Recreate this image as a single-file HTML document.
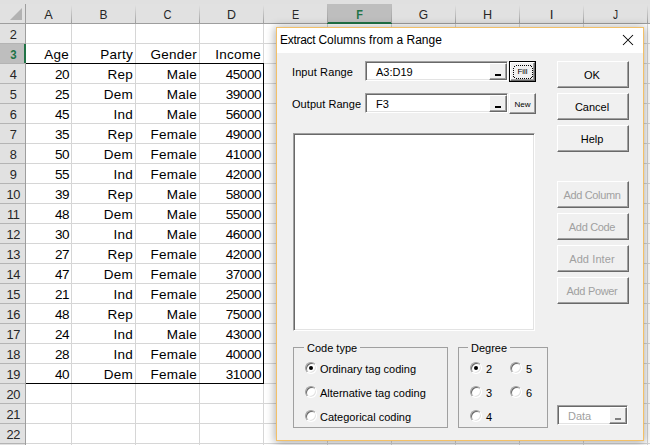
<!DOCTYPE html>
<html><head><meta charset="utf-8"><title>Extract Columns from a Range</title>
<style>
html,body{margin:0;padding:0;}
body{width:650px;height:445px;overflow:hidden;background:#fff;position:relative;font-family:"Liberation Sans",sans-serif;}
.a{position:absolute;}
.sheet{position:absolute;left:0;top:0;width:650px;height:445px;overflow:hidden;background:#fff;}
.hdr{background:#e1e1e1;}
.vl{position:absolute;width:1px;background:#d6d6d6;}
.hl{position:absolute;height:1px;background:#d6d6d6;}
.ch{position:absolute;top:5px;height:19px;line-height:19px;text-align:center;font-size:13.5px;color:#262626;}
.rh{position:absolute;left:0;width:25px;height:19px;line-height:22px;text-align:center;font-size:13.5px;color:#262626;}
.c{position:absolute;height:19px;line-height:21px;text-align:right;font-size:13.5px;color:#000;white-space:nowrap;}
.c{letter-spacing:0.25px;}
.c.n{letter-spacing:-0.45px;}
.rh{letter-spacing:-0.5px;text-indent:1.5px;transform:scaleX(0.95);}
.dlg{position:absolute;left:276px;top:27px;width:366px;height:412px;border:1px solid #f3c067;background:#f0f0f0;box-shadow:0 1px 9px 1px rgba(0,0,0,0.33);}
.title{position:absolute;left:0;top:0;width:366px;height:25px;background:#fff;}
.tt{position:absolute;left:3px;top:0;line-height:25px;font-size:12px;color:#000;white-space:nowrap;}
.lbl{position:absolute;font-size:11px;line-height:13px;color:#000;white-space:nowrap;}
.btn{position:absolute;box-sizing:border-box;background:#f0f0f0;border:1px solid;border-color:#fff #696969 #696969 #fff;box-shadow:inset -1px -1px 0 #a0a0a0;font-size:11px;color:#000;text-align:center;white-space:nowrap;}
.btn.dis{color:#a0a0a0;letter-spacing:-0.33px;}
.sunk{position:absolute;box-sizing:border-box;background:#fff;border:1px solid;border-color:#a0a0a0 #fff #fff #a0a0a0;box-shadow:inset 1px 1px 0 #696969,inset -1px -1px 0 #e3e3e3;}
.grp{position:absolute;box-sizing:border-box;border:1px solid #a0a0a0;}
.grp span{position:absolute;top:-6px;background:#f0f0f0;font-size:11px;line-height:13px;padding:0 3px;white-space:nowrap;}
.rad{position:absolute;width:12px;height:12px;box-sizing:border-box;border-radius:50%;background:#fff;border:1px solid;border-color:#a0a0a0 #fff #fff #a0a0a0;box-shadow:inset 1px 1px 0 #696969,inset -1px -1px 0 #e3e3e3;transform:rotate(0deg);}
.rad.on:after{content:"";position:absolute;left:3px;top:3px;width:4px;height:4px;border-radius:50%;background:#000;}
</style></head><body>
<div class="sheet">

<div class="a" style="left:0;top:0;width:650px;height:4px;background:#e0e0e0"></div>
<div class="a hdr" style="left:0;top:4px;width:650px;height:19px"></div>
<div class="a hdr" style="left:0;top:24px;width:25px;height:421px"></div>
<div class="a" style="left:327px;top:4px;width:65px;height:18px;background:#bebebe"></div>
<div class="a" style="left:327px;top:22px;width:65px;height:2px;background:#217346"></div>
<div class="a" style="left:0;top:44px;width:24px;height:19px;background:#bebebe"></div>
<div class="vl" style="left:71px;top:24px;height:421px"></div>
<div class="vl" style="left:135px;top:24px;height:421px"></div>
<div class="vl" style="left:199px;top:24px;height:421px"></div>
<div class="vl" style="left:263px;top:24px;height:421px"></div>
<div class="vl" style="left:327px;top:24px;height:421px"></div>
<div class="vl" style="left:391px;top:24px;height:421px"></div>
<div class="vl" style="left:455px;top:24px;height:421px"></div>
<div class="vl" style="left:519px;top:24px;height:421px"></div>
<div class="vl" style="left:583px;top:24px;height:421px"></div>
<div class="vl" style="left:647px;top:24px;height:421px"></div>
<div class="hl" style="left:26px;top:43px;width:624px"></div>
<div class="hl" style="left:0;top:43px;width:25px;background:#b4b4b4"></div>
<div class="hl" style="left:26px;top:63px;width:624px"></div>
<div class="hl" style="left:0;top:63px;width:25px;background:#b4b4b4"></div>
<div class="hl" style="left:26px;top:83px;width:624px"></div>
<div class="hl" style="left:0;top:83px;width:25px;background:#b4b4b4"></div>
<div class="hl" style="left:26px;top:103px;width:624px"></div>
<div class="hl" style="left:0;top:103px;width:25px;background:#b4b4b4"></div>
<div class="hl" style="left:26px;top:123px;width:624px"></div>
<div class="hl" style="left:0;top:123px;width:25px;background:#b4b4b4"></div>
<div class="hl" style="left:26px;top:143px;width:624px"></div>
<div class="hl" style="left:0;top:143px;width:25px;background:#b4b4b4"></div>
<div class="hl" style="left:26px;top:163px;width:624px"></div>
<div class="hl" style="left:0;top:163px;width:25px;background:#b4b4b4"></div>
<div class="hl" style="left:26px;top:183px;width:624px"></div>
<div class="hl" style="left:0;top:183px;width:25px;background:#b4b4b4"></div>
<div class="hl" style="left:26px;top:203px;width:624px"></div>
<div class="hl" style="left:0;top:203px;width:25px;background:#b4b4b4"></div>
<div class="hl" style="left:26px;top:223px;width:624px"></div>
<div class="hl" style="left:0;top:223px;width:25px;background:#b4b4b4"></div>
<div class="hl" style="left:26px;top:243px;width:624px"></div>
<div class="hl" style="left:0;top:243px;width:25px;background:#b4b4b4"></div>
<div class="hl" style="left:26px;top:263px;width:624px"></div>
<div class="hl" style="left:0;top:263px;width:25px;background:#b4b4b4"></div>
<div class="hl" style="left:26px;top:283px;width:624px"></div>
<div class="hl" style="left:0;top:283px;width:25px;background:#b4b4b4"></div>
<div class="hl" style="left:26px;top:303px;width:624px"></div>
<div class="hl" style="left:0;top:303px;width:25px;background:#b4b4b4"></div>
<div class="hl" style="left:26px;top:323px;width:624px"></div>
<div class="hl" style="left:0;top:323px;width:25px;background:#b4b4b4"></div>
<div class="hl" style="left:26px;top:343px;width:624px"></div>
<div class="hl" style="left:0;top:343px;width:25px;background:#b4b4b4"></div>
<div class="hl" style="left:26px;top:363px;width:624px"></div>
<div class="hl" style="left:0;top:363px;width:25px;background:#b4b4b4"></div>
<div class="hl" style="left:26px;top:383px;width:624px"></div>
<div class="hl" style="left:0;top:383px;width:25px;background:#b4b4b4"></div>
<div class="hl" style="left:26px;top:403px;width:624px"></div>
<div class="hl" style="left:0;top:403px;width:25px;background:#b4b4b4"></div>
<div class="hl" style="left:26px;top:423px;width:624px"></div>
<div class="hl" style="left:0;top:423px;width:25px;background:#b4b4b4"></div>
<div class="hl" style="left:26px;top:443px;width:624px"></div>
<div class="hl" style="left:0;top:443px;width:25px;background:#b4b4b4"></div>
<div class="hl" style="left:26px;top:463px;width:624px"></div>
<div class="hl" style="left:0;top:463px;width:25px;background:#b4b4b4"></div>
<div class="a" style="left:0;top:23px;width:650px;height:1px;background:#9e9e9e"></div>
<div class="a" style="left:327px;top:22px;width:65px;height:2px;background:#217346"></div>
<div class="a" style="left:25px;top:4px;width:1px;height:441px;background:#9e9e9e"></div>
<div class="a" style="left:24px;top:44px;width:2px;height:19px;background:#217346"></div>
<div class="a" style="left:71px;top:5px;width:1px;height:18px;background:linear-gradient(to bottom,rgba(160,160,160,0),rgba(160,160,160,1))"></div>
<div class="a" style="left:135px;top:5px;width:1px;height:18px;background:linear-gradient(to bottom,rgba(160,160,160,0),rgba(160,160,160,1))"></div>
<div class="a" style="left:199px;top:5px;width:1px;height:18px;background:linear-gradient(to bottom,rgba(160,160,160,0),rgba(160,160,160,1))"></div>
<div class="a" style="left:263px;top:5px;width:1px;height:18px;background:linear-gradient(to bottom,rgba(160,160,160,0),rgba(160,160,160,1))"></div>
<div class="a" style="left:327px;top:5px;width:1px;height:18px;background:linear-gradient(to bottom,rgba(160,160,160,0),rgba(160,160,160,1))"></div>
<div class="a" style="left:391px;top:5px;width:1px;height:18px;background:linear-gradient(to bottom,rgba(160,160,160,0),rgba(160,160,160,1))"></div>
<div class="a" style="left:455px;top:5px;width:1px;height:18px;background:linear-gradient(to bottom,rgba(160,160,160,0),rgba(160,160,160,1))"></div>
<div class="a" style="left:519px;top:5px;width:1px;height:18px;background:linear-gradient(to bottom,rgba(160,160,160,0),rgba(160,160,160,1))"></div>
<div class="a" style="left:583px;top:5px;width:1px;height:18px;background:linear-gradient(to bottom,rgba(160,160,160,0),rgba(160,160,160,1))"></div>
<div class="a" style="left:647px;top:5px;width:1px;height:18px;background:linear-gradient(to bottom,rgba(160,160,160,0),rgba(160,160,160,1))"></div>
<svg class="a" style="left:10px;top:8px" width="12" height="12"><polygon points="12,0 12,12 0,12" fill="#b2b2b2"/></svg>
<div class="ch" style="left:26px;width:45px;transform:scaleX(0.94);">A</div>
<div class="ch" style="left:72px;width:63px;transform:scaleX(0.89);">B</div>
<div class="ch" style="left:136px;width:63px;transform:scaleX(0.82);">C</div>
<div class="ch" style="left:200px;width:63px;transform:scaleX(0.92);">D</div>
<div class="ch" style="left:264px;width:63px;transform:scaleX(0.80);">E</div>
<div class="ch" style="left:328px;width:63px;font-weight:bold;color:#217346;transform:scaleX(0.8);">F</div>
<div class="ch" style="left:392px;width:63px;transform:scaleX(0.89);">G</div>
<div class="ch" style="left:456px;width:63px;transform:scaleX(0.93);">H</div>
<div class="ch" style="left:520px;width:63px;transform:scaleX(0.99);">I</div>
<div class="ch" style="left:584px;width:63px;transform:scaleX(0.75);">J</div>
<div class="rh" style="top:24px;">2</div>
<div class="rh" style="top:44px;font-weight:bold;color:#217346;transform:scaleX(0.85);">3</div>
<div class="rh" style="top:64px;">4</div>
<div class="rh" style="top:84px;">5</div>
<div class="rh" style="top:104px;">6</div>
<div class="rh" style="top:124px;">7</div>
<div class="rh" style="top:144px;">8</div>
<div class="rh" style="top:164px;">9</div>
<div class="rh" style="top:184px;">10</div>
<div class="rh" style="top:204px;">11</div>
<div class="rh" style="top:224px;">12</div>
<div class="rh" style="top:244px;">13</div>
<div class="rh" style="top:264px;">14</div>
<div class="rh" style="top:284px;">15</div>
<div class="rh" style="top:304px;">16</div>
<div class="rh" style="top:324px;">17</div>
<div class="rh" style="top:344px;">18</div>
<div class="rh" style="top:364px;">19</div>
<div class="rh" style="top:384px;">20</div>
<div class="rh" style="top:404px;">21</div>
<div class="rh" style="top:424px;">22</div>
<div class="c" style="left:25px;top:44px;width:44px">Age</div>
<div class="c" style="left:71px;top:44px;width:62px">Party</div>
<div class="c" style="left:135px;top:44px;width:62px">Gender</div>
<div class="c" style="left:199px;top:44px;width:62px">Income</div>
<div class="c n" style="left:25px;top:64px;width:44px">20</div>
<div class="c" style="left:71px;top:64px;width:62px">Rep</div>
<div class="c" style="left:135px;top:64px;width:62px">Male</div>
<div class="c n" style="left:199px;top:64px;width:62px">45000</div>
<div class="c n" style="left:25px;top:84px;width:44px">25</div>
<div class="c" style="left:71px;top:84px;width:62px">Dem</div>
<div class="c" style="left:135px;top:84px;width:62px">Male</div>
<div class="c n" style="left:199px;top:84px;width:62px">39000</div>
<div class="c n" style="left:25px;top:104px;width:44px">45</div>
<div class="c" style="left:71px;top:104px;width:62px">Ind</div>
<div class="c" style="left:135px;top:104px;width:62px">Male</div>
<div class="c n" style="left:199px;top:104px;width:62px">56000</div>
<div class="c n" style="left:25px;top:124px;width:44px">35</div>
<div class="c" style="left:71px;top:124px;width:62px">Rep</div>
<div class="c" style="left:135px;top:124px;width:62px">Female</div>
<div class="c n" style="left:199px;top:124px;width:62px">49000</div>
<div class="c n" style="left:25px;top:144px;width:44px">50</div>
<div class="c" style="left:71px;top:144px;width:62px">Dem</div>
<div class="c" style="left:135px;top:144px;width:62px">Female</div>
<div class="c n" style="left:199px;top:144px;width:62px">41000</div>
<div class="c n" style="left:25px;top:164px;width:44px">55</div>
<div class="c" style="left:71px;top:164px;width:62px">Ind</div>
<div class="c" style="left:135px;top:164px;width:62px">Female</div>
<div class="c n" style="left:199px;top:164px;width:62px">42000</div>
<div class="c n" style="left:25px;top:184px;width:44px">39</div>
<div class="c" style="left:71px;top:184px;width:62px">Rep</div>
<div class="c" style="left:135px;top:184px;width:62px">Male</div>
<div class="c n" style="left:199px;top:184px;width:62px">58000</div>
<div class="c n" style="left:25px;top:204px;width:44px">48</div>
<div class="c" style="left:71px;top:204px;width:62px">Dem</div>
<div class="c" style="left:135px;top:204px;width:62px">Male</div>
<div class="c n" style="left:199px;top:204px;width:62px">55000</div>
<div class="c n" style="left:25px;top:224px;width:44px">30</div>
<div class="c" style="left:71px;top:224px;width:62px">Ind</div>
<div class="c" style="left:135px;top:224px;width:62px">Male</div>
<div class="c n" style="left:199px;top:224px;width:62px">46000</div>
<div class="c n" style="left:25px;top:244px;width:44px">27</div>
<div class="c" style="left:71px;top:244px;width:62px">Rep</div>
<div class="c" style="left:135px;top:244px;width:62px">Female</div>
<div class="c n" style="left:199px;top:244px;width:62px">42000</div>
<div class="c n" style="left:25px;top:264px;width:44px">47</div>
<div class="c" style="left:71px;top:264px;width:62px">Dem</div>
<div class="c" style="left:135px;top:264px;width:62px">Female</div>
<div class="c n" style="left:199px;top:264px;width:62px">37000</div>
<div class="c n" style="left:25px;top:284px;width:44px">21</div>
<div class="c" style="left:71px;top:284px;width:62px">Ind</div>
<div class="c" style="left:135px;top:284px;width:62px">Female</div>
<div class="c n" style="left:199px;top:284px;width:62px">25000</div>
<div class="c n" style="left:25px;top:304px;width:44px">48</div>
<div class="c" style="left:71px;top:304px;width:62px">Rep</div>
<div class="c" style="left:135px;top:304px;width:62px">Male</div>
<div class="c n" style="left:199px;top:304px;width:62px">75000</div>
<div class="c n" style="left:25px;top:324px;width:44px">24</div>
<div class="c" style="left:71px;top:324px;width:62px">Ind</div>
<div class="c" style="left:135px;top:324px;width:62px">Male</div>
<div class="c n" style="left:199px;top:324px;width:62px">43000</div>
<div class="c n" style="left:25px;top:344px;width:44px">28</div>
<div class="c" style="left:71px;top:344px;width:62px">Ind</div>
<div class="c" style="left:135px;top:344px;width:62px">Female</div>
<div class="c n" style="left:199px;top:344px;width:62px">40000</div>
<div class="c n" style="left:25px;top:364px;width:44px">40</div>
<div class="c" style="left:71px;top:364px;width:62px">Dem</div>
<div class="c" style="left:135px;top:364px;width:62px">Female</div>
<div class="c n" style="left:199px;top:364px;width:62px">31000</div>
<div class="a" style="left:26px;top:63px;width:238px;height:1px;background:#000"></div>
<div class="a" style="left:26px;top:383px;width:238px;height:1px;background:#000"></div>
<div class="a" style="left:263px;top:63px;width:1px;height:321px;background:#000"></div>
</div>
<div class="dlg">
<div class="title"><div class="tt"><span style="letter-spacing:-0.28px">Extract </span>Columns from a Range</div>
<svg class="a" style="left:345px;top:6px" width="12" height="12" viewBox="0 0 12 12"><path d="M1 1 L11 11 M11 1 L1 11" stroke="#000" stroke-width="1.05" fill="none"/></svg>
</div>
<div class="lbl" style="left:15px;top:38px;letter-spacing:0.1px">Input Range</div>
<div class="lbl" style="left:15px;top:70px;letter-spacing:0.05px">Output Range</div>
<div class="sunk" style="left:88px;top:33px;width:143px;height:20px"><div class="lbl" style="left:10px;top:4px;">A3:D19</div><div class="btn" style="right:0px;top:1px;width:18px;height:17px"><div class="a" style="left:5px;bottom:3px;width:6px;height:2px;background:#000"></div></div></div>
<div class="sunk" style="left:88px;top:65px;width:143px;height:20px"><div class="lbl" style="left:10px;top:4px;">F3</div><div class="btn" style="right:0px;top:1px;width:18px;height:17px"><div class="a" style="left:5px;bottom:3px;width:6px;height:2px;background:#000"></div></div></div>
<div class="a" style="left:232px;top:33px;width:27px;height:21px;background:#000"></div>
<div class="btn" style="left:233px;top:34px;width:25px;height:19px;font-size:8px;line-height:17px"><svg class="a" style="left:2px;top:2px" width="20" height="14" shape-rendering="crispEdges"><path d="M2.5 0.5H17.5M19.5 2.5V11.5M17.5 13.5H2.5M0.5 11.5V2.5" stroke="#000" stroke-width="1" stroke-dasharray="1 1" fill="none"/><rect x="1" y="1" width="1" height="1"/><rect x="18" y="1" width="1" height="1"/><rect x="1" y="12" width="1" height="1"/><rect x="18" y="12" width="1" height="1"/></svg>Fill</div>
<div class="btn" style="left:232px;top:65px;width:27px;height:21px;font-size:8px;line-height:21px">New</div>
<div class="btn" style="left:280px;top:33px;width:72px;height:27px;line-height:27px;padding-right:2px">OK</div>
<div class="btn" style="left:280px;top:65px;width:72px;height:27px;line-height:27px;padding-right:2px">Cancel</div>
<div class="btn" style="left:280px;top:97px;width:72px;height:27px;line-height:27px;padding-right:2px">Help</div>
<div class="btn dis" style="left:280px;top:153px;width:72px;height:27px;line-height:27px;padding-right:2px">Add Column</div>
<div class="btn dis" style="left:280px;top:185px;width:72px;height:27px;line-height:27px;padding-right:2px">Add Code</div>
<div class="btn dis" style="left:280px;top:217px;width:72px;height:27px;line-height:27px;padding-right:2px;letter-spacing:0.1px">Add Inter</div>
<div class="btn dis" style="left:280px;top:249px;width:72px;height:27px;line-height:27px;padding-right:2px">Add Power</div>
<div class="sunk" style="left:16px;top:105px;width:242px;height:198px"></div>
<div class="grp" style="left:16px;top:319px;width:155px;height:81px"><span style="left:10px">Code type</span></div>
<div class="grp" style="left:181px;top:319px;width:90px;height:81px"><span style="left:9px">Degree</span></div>
<div class="rad on" style="left:28px;top:334px"></div>
<div class="lbl" style="left:43px;top:335px">Ordinary tag coding</div>
<div class="rad" style="left:28px;top:358px"></div>
<div class="lbl" style="left:43px;top:359px">Alternative tag coding</div>
<div class="rad" style="left:28px;top:382px"></div>
<div class="lbl" style="left:43px;top:383px">Categorical coding</div>
<div class="rad on" style="left:193px;top:334px"></div>
<div class="lbl" style="left:209px;top:335px">2</div>
<div class="rad" style="left:193px;top:358px"></div>
<div class="lbl" style="left:209px;top:359px">3</div>
<div class="rad" style="left:193px;top:382px"></div>
<div class="lbl" style="left:209px;top:383px">4</div>
<div class="rad" style="left:233px;top:334px"></div>
<div class="lbl" style="left:249px;top:335px">5</div>
<div class="rad" style="left:233px;top:358px"></div>
<div class="lbl" style="left:249px;top:359px">6</div>
<div class="sunk" style="left:280px;top:377px;width:71px;height:20px"><div class="lbl" style="left:10px;top:4px;color:#a0a0a0;">Data</div><div class="btn" style="right:0px;top:1px;width:18px;height:17px"><div class="a" style="left:5px;bottom:3px;width:6px;height:2px;background:#808080"></div></div></div>
</div>
</body></html>
